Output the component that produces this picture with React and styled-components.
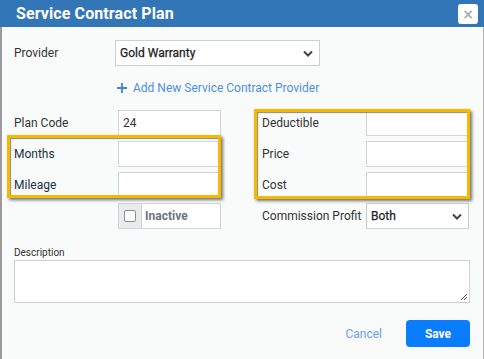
import React from 'react';
import styled, { createGlobalStyle } from 'styled-components';

const GlobalStyle = createGlobalStyle`
  html, body {
    margin: 0;
    padding: 0;
    background: #ffffff;
  }
  body {
    font-family: Roboto, "Liberation Sans", Arial, sans-serif;
    color: #333;
  }
`;

const Modal = styled.div`
  width: 484px;
  height: 359px;
  display: flex;
  flex-direction: column;
  overflow: hidden;
`;

const Header = styled.div`
  height: 27px;
  background: #3376b8;
  display: flex;
  align-items: center;
  justify-content: space-between;
  padding: 0 6px 0 16px;
  flex-shrink: 0;
`;

const Title = styled.h2`
  margin: 0;
  font-size: 16px;
  font-weight: 700;
  color: #fff;
  letter-spacing: 0.1px;
`;

const CloseButton = styled.button`
  width: 20px;
  height: 20px;
  border: none;
  border-radius: 3px;
  background: #fff;
  color: #a9aeb4;
  font-size: 14px;
  font-weight: 700;
  line-height: 20px;
  padding: 0;
  margin-top: 1px;
  font-family: "DejaVu Sans", sans-serif;
`;

const Body = styled.div`
  flex: 1;
  background: #f9fbfb;
  border-left: 2px solid #9b9b9b;
  border-right: 1px solid #b5b5b5;
  padding: 13px 13px 0 12px;
  display: flex;
  flex-direction: column;
`;

const Label = styled.label`
  font-size: 12px;
  color: ${(p) => p.color || '#333'};
  display: flex;
  align-items: center;
`;

const ProviderRow = styled.div`
  display: grid;
  grid-template-columns: 101px 205px;
  height: 26px;
`;

const Select = styled.div`
  height: 26px;
  box-sizing: border-box;
  border: 1px solid #cfcfcf;
  background: #fff;
  display: flex;
  align-items: center;
  justify-content: space-between;
  padding: 0 6px 0 4px;
  font-size: 12px;
  font-weight: 400;
  color: #222;
  -webkit-text-stroke: 0.25px #222;
`;

const LinkRow = styled.div`
  height: 44px;
  display: flex;
  align-items: center;
  padding-left: 103px;
`;

const AddLink = styled.a`
  display: flex;
  align-items: center;
  gap: 6px;
  color: #4d8fe0;
  font-size: 12px;
  text-decoration: none;
`;

const FormGrid = styled.div`
  position: relative;
  display: grid;
  grid-template-columns: 104px 103px 41px 104px 103px;
  grid-auto-rows: 26px;
  row-gap: 5px;
`;

const Input = styled.div`
  box-sizing: border-box;
  border: 1px solid #d3d3d3;
  background: #fff;
  font-size: 12px;
  color: #333;
  display: flex;
  align-items: center;
  padding-left: 4px;
`;

const Spacer = styled.div``;

const CheckGroup = styled.div`
  display: flex;
  box-sizing: border-box;
  border: 1px solid #d3d3d3;
  background: #fff;
`;

const CheckAddon = styled.div`
  width: 22px;
  background: #e9ecef;
  border-right: 1px solid #d3d3d3;
  display: flex;
  align-items: center;
  justify-content: center;
`;

const CheckBox = styled.span`
  width: 10px;
  height: 10px;
  border: 1px solid #8d8d8d;
  border-radius: 2px;
  background: #fff;
`;

const CheckText = styled.span`
  font-size: 12px;
  font-weight: 700;
  color: #6b7580;
  display: flex;
  align-items: center;
  padding-left: 3px;
`;

const Highlight = styled.div`
  position: absolute;
  box-sizing: border-box;
  border: 3px solid #f7b800;
  box-shadow: 2px 2px 3px rgba(0, 0, 0, 0.55), inset 1px 1px 1px rgba(0, 0, 0, 0.45);
  left: ${(p) => p.left}px;
  top: ${(p) => p.top}px;
  width: ${(p) => p.width}px;
  height: ${(p) => p.height}px;
  pointer-events: none;
`;

const DescLabel = styled.div`
  font-size: 10px;
  color: #333;
  margin-top: 18px;
  line-height: 12px;
`;

const TextArea = styled.div`
  position: relative;
  margin-top: 1px;
  height: 43px;
  box-sizing: border-box;
  border: 1px solid #cfcfcf;
  background: #fff;
`;

const Grip = styled.svg`
  position: absolute;
  right: 1px;
  bottom: 1px;
`;

const Footer = styled.div`
  display: flex;
  justify-content: flex-end;
  align-items: center;
  gap: 24px;
  margin-top: 17px;
`;

const CancelButton = styled.button`
  border: none;
  background: none;
  padding: 0;
  color: #6b9ce6;
  font-family: inherit;
  font-size: 12px;
`;

const SaveButton = styled.button`
  width: 64px;
  height: 27px;
  border: none;
  border-radius: 4px;
  background: #0a7cfe;
  color: #fff;
  font-family: inherit;
  font-size: 12px;
  font-weight: 700;
`;

const Chevron = () => (
  <svg width="10" height="7" viewBox="0 0 10 7">
    <polyline points="1,1.5 5,5.5 9,1.5" fill="none" stroke="#444" strokeWidth="2" />
  </svg>
);

const Plus = () => (
  <svg width="10" height="10" viewBox="0 0 10 10">
    <path d="M5 0 V10 M0 5 H10" stroke="#3d86dc" strokeWidth="1.8" />
  </svg>
);

export default function App() {
  return (
    <>
      <GlobalStyle />
      <Modal>
        <Header>
          <Title>Service Contract Plan</Title>
          <CloseButton>×</CloseButton>
        </Header>
        <Body>
          <ProviderRow>
            <Label>Provider</Label>
            <Select>
              Gold Warranty
              <Chevron />
            </Select>
          </ProviderRow>
          <LinkRow>
            <AddLink href="#">
              <Plus />
              Add New Service Contract Provider
            </AddLink>
          </LinkRow>
          <FormGrid>
            <Label>Plan Code</Label>
            <Input>24</Input>
            <Spacer />
            <Label>Deductible</Label>
            <Input />

            <Label color="#22303f">Months</Label>
            <Input />
            <Spacer />
            <Label>Price</Label>
            <Input />

            <Label color="#22303f">Mileage</Label>
            <Input />
            <Spacer />
            <Label>Cost</Label>
            <Input />

            <Spacer />
            <CheckGroup>
              <CheckAddon>
                <CheckBox />
              </CheckAddon>
              <CheckText>Inactive</CheckText>
            </CheckGroup>
            <Spacer />
            <Label>Commission Profit</Label>
            <Select>
              Both
              <Chevron />
            </Select>

            <Highlight left={-7} top={25} width={214} height={63} />
            <Highlight left={240} top={-1} width={216} height={90} />
          </FormGrid>
          <DescLabel>Description</DescLabel>
          <TextArea>
            <Grip width="8" height="8" viewBox="0 0 8 8">
              <path d="M7 1 L1 7 M7 4 L4 7" stroke="#555" strokeWidth="1" />
            </Grip>
          </TextArea>
          <Footer>
            <CancelButton>Cancel</CancelButton>
            <SaveButton>Save</SaveButton>
          </Footer>
        </Body>
      </Modal>
    </>
  );
}
